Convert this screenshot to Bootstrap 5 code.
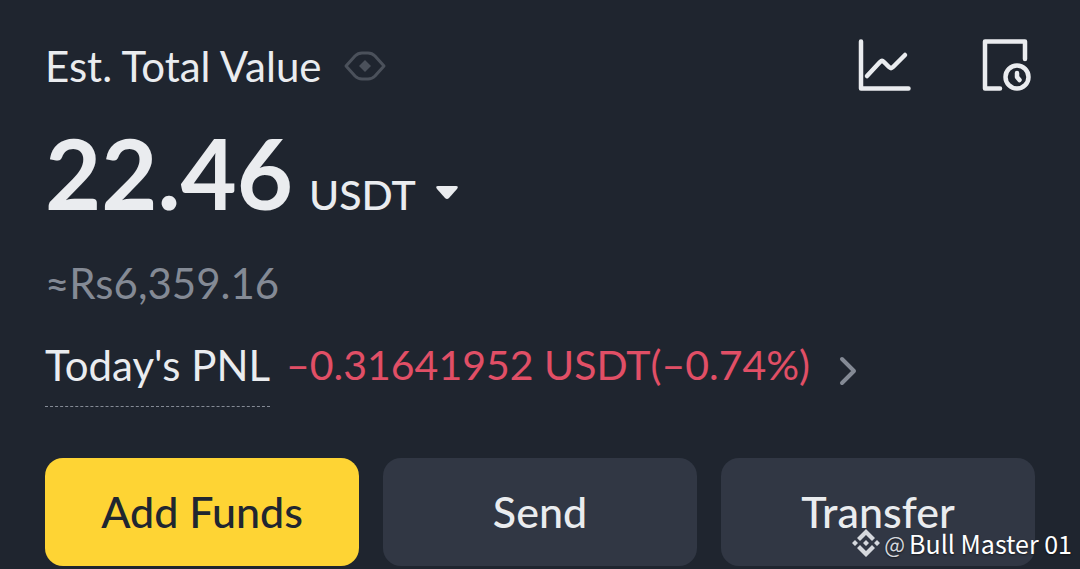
<!DOCTYPE html>
<html lang="en">
<head>
<meta charset="utf-8">
<meta name="viewport" content="width=device-width, initial-scale=1">
<title>Wallet overview</title>
<link href="https://cdn.jsdelivr.net/npm/bootstrap@5.3.0/dist/css/bootstrap.min.css" rel="stylesheet">
<style>
  body { background: #1f252f; color: #eaecef; font-family: Lato, "Liberation Sans", sans-serif; font-size: 42px; line-height: 50px; }
  .wallet { padding: 39px 45px 3px; }
  .plain { background: none; border: 0; padding: 0; color: inherit; display: flex; }
  svg { display: block; flex: none; }
  .line { fill: none; stroke: currentColor; stroke-linecap: round; stroke-linejoin: round; }
  .total { margin-top: 26px; }
  .amount { font-size: 97px; line-height: 112px; font-weight: 700; }
  .unit { font-size: 41px; font-weight: 500; }
  .fiat { margin-top: 29px; }
  .today { margin-top: 32px; }
  .dim { color: #848a95; }
  .eye { color: #4b515b; margin-left: 20px; }
  .loss { color: #e14f66; font-size: 41px; }
  .pnl { border-bottom: 1px dashed #848a95; padding-bottom: 16px; }
  .tools { gap: 71px; }
  .actions { display: grid; grid-template-columns: repeat(3, 1fr); gap: 24px; margin-top: 51px; }
  .action { --bs-btn-color: #eaecef; --bs-btn-bg: #313744; --bs-btn-hover-color: #fff; --bs-btn-hover-bg: #3b4250; height: 108px; border: 0; border-radius: 18px; padding: 0; font-size: 43px; line-height: 50px; font-weight: 500; }
  .action-main { --bs-btn-color: #202630; --bs-btn-bg: #fed434; --bs-btn-hover-color: #202630; --bs-btn-hover-bg: #ffdd58; }
  .credit { right: 8px; bottom: 10px; font: 400 25px/32px "Noto Sans CJK SC", sans-serif; color: #fff; text-shadow: 0 1px 2px #0008; }
  .credit-mark { color: #d5d8dd; }
  .credit-at { font-size: 22px; }
</style>
</head>
<body>
<main class="wallet position-relative">
  <header class="d-flex justify-content-between align-items-end">
    <div class="d-flex align-items-center">
      <span>Est. Total Value</span>
      <button class="plain eye" aria-label="Hide balance">
        <svg width="46" height="32" viewBox="0 0 46 32"><path class="line" stroke-width="3" d="M4 16L13 6Q16 3 20 3H26Q30 3 33 6L42 16L33 26Q30 29 26 29H20Q16 29 13 26Z"/><path fill="currentColor" d="M23 10l6 6-6 6-6-6z"/></svg>
      </button>
    </div>
    <div class="d-flex tools me-1">
      <button class="plain" aria-label="Profit chart">
        <svg width="53" height="52" viewBox="0 0 53 52"><path class="line" stroke-width="4.5" d="M3 2.5V49.5H50.5M9 37L22 23Q24 21 26 23L31 28Q33 30 35 28L47 16"/></svg>
      </button>
      <button class="plain" aria-label="Order history">
        <svg width="49" height="52" viewBox="0 0 49 52"><path class="line" stroke-width="4.5" d="M43 20V2.5H3V49.5H18"/><circle class="line" stroke-width="4.5" cx="35" cy="38" r="11.5"/><path class="line" stroke-width="4.5" d="M35 34V38L37.5 41"/></svg>
      </button>
    </div>
  </header>

  <section class="total d-flex align-items-baseline">
    <span class="amount">22.46</span>
    <button class="plain align-items-center unit ms-3" aria-label="Currency USDT">USDT
      <svg class="ms-3" width="30" height="22" viewBox="0 0 30 22"><path fill="currentColor" d="M6 2H24Q27 2 25 5L17 14Q15 16 13 14L5 5Q3 2 6 2Z"/></svg>
    </button>
  </section>

  <div class="fiat dim">≈Rs6,359.16</div>

  <section class="today d-flex align-items-start">
    <span class="pnl">Today's PNL</span>
    <span class="loss ms-3">–0.31641952 USDT(–0.74%)</span>
    <a href="#pnl" class="dim ms-4 pt-3" aria-label="Profit details"><svg width="30" height="30" viewBox="0 0 30 30"><path class="line" stroke-width="4" d="M8 3L20 15L8 27"/></svg></a>
  </section>

  <div class="actions">
    <button class="btn action action-main">Add Funds</button>
    <button class="btn action">Send</button>
    <button class="btn action">Transfer</button>
  </div>

  <div class="credit position-absolute d-flex align-items-center">
    <svg class="credit-mark me-1" width="28" height="28" viewBox="0 0 28 28"><path fill="currentColor" d="M14 0l9 9-3 3-6-6-6 6-3-3zM14 28l9-9-3-3-6 6-6-6-3 3zM14 11l3 3-3 3-3-3zM3 11l3 3-3 3-3-3zM25 11l3 3-3 3-3-3z"/></svg>
    <span class="credit-mark credit-at me-1">@</span><span>Bull Master 01</span>
  </div>
</main>
<script src="https://cdn.jsdelivr.net/npm/bootstrap@5.3.0/dist/js/bootstrap.bundle.min.js"></script>
</body>
</html>
